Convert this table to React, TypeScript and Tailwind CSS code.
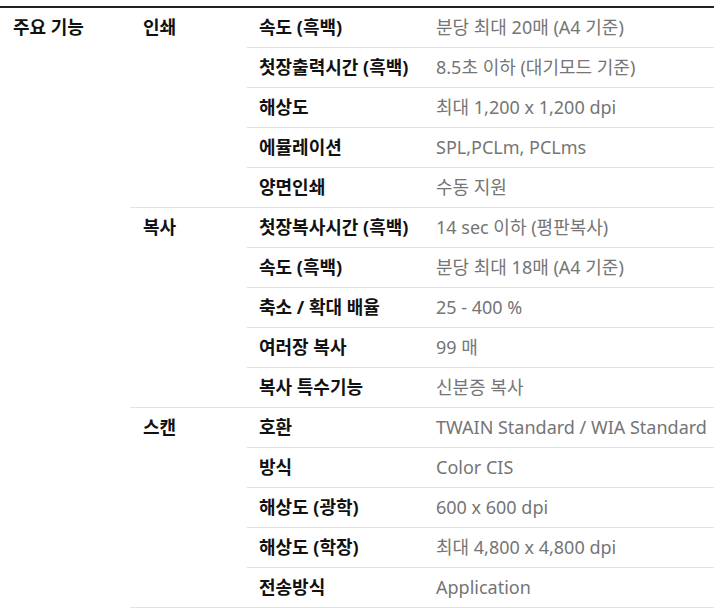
import React from "react";

type Spec = { label: string; value: string };
type Group = { name: string; rows: Spec[] };

const groups: Group[] = [
  {
    name: "인쇄",
    rows: [
      { label: "속도 (흑백)", value: "분당 최대 20매 (A4 기준)" },
      { label: "첫장출력시간 (흑백)", value: "8.5초 이하 (대기모드 기준)" },
      { label: "해상도", value: "최대 1,200 x 1,200 dpi" },
      { label: "에뮬레이션", value: "SPL,PCLm, PCLms" },
      { label: "양면인쇄", value: "수동 지원" },
    ],
  },
  {
    name: "복사",
    rows: [
      { label: "첫장복사시간 (흑백)", value: "14 sec 이하 (평판복사)" },
      { label: "속도 (흑백)", value: "분당 최대 18매 (A4 기준)" },
      { label: "축소 / 확대 배율", value: "25 - 400 %" },
      { label: "여러장 복사", value: "99 매" },
      { label: "복사 특수기능", value: "신분증 복사" },
    ],
  },
  {
    name: "스캔",
    rows: [
      { label: "호환", value: "TWAIN Standard / WIA Standard" },
      { label: "방식", value: "Color CIS" },
      { label: "해상도 (광학)", value: "600 x 600 dpi" },
      { label: "해상도 (학장)", value: "최대 4,800 x 4,800 dpi" },
      { label: "전송방식", value: "Application" },
    ],
  },
];

const App = () => {
  return (
    <div
      className="w-[721px] h-[608px] bg-white pt-[6px] overflow-hidden"
      style={{ fontFamily: '"Noto Sans", "Noto Sans CJK KR", sans-serif' }}
    >
      <div className="w-[714px] border-t-2 border-[#222] flex">
        {/* Category */}
        <div className="w-[130px] shrink-0 pl-[13px] h-[39px] flex items-center text-[18px] font-bold text-[#111] whitespace-nowrap">
          주요 기능
        </div>

        <div className="flex-1">
          {groups.map((group) => (
            <div key={group.name} className="flex border-b border-[#e3e3e3]">
              <div className="w-[117px] shrink-0 pl-[13px] h-[39px] flex items-center text-[18px] font-bold text-[#111]">
                {group.name}
              </div>
              <div className="flex-1">
                {group.rows.map((row, i) => (
                  <div
                    key={row.label}
                    className={`flex items-center ${
                      i < group.rows.length - 1 ? "h-[40px] border-b border-[#e3e3e3]" : "h-[39px]"
                    }`}
                  >
                    <div className="w-[177px] shrink-0 pl-[12px] text-[18px] font-bold text-[#111] whitespace-nowrap">
                      {row.label}
                    </div>
                    <div className="flex-1 pl-[12px] text-[18px] text-[#757575] whitespace-nowrap">
                      {row.value}
                    </div>
                  </div>
                ))}
              </div>
            </div>
          ))}
        </div>
      </div>
    </div>
  );
};

export default App;
